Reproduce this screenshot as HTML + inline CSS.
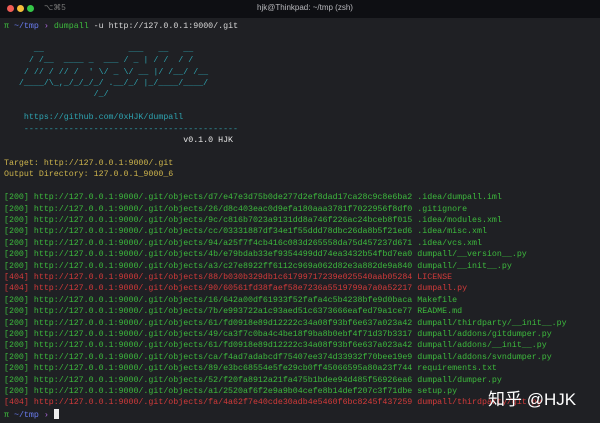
<!DOCTYPE html>
<html><head><meta charset="utf-8"><style>
html,body{margin:0;padding:0;}
body{width:600px;height:423px;background:#1f2024;overflow:hidden;position:relative;font-family:"Liberation Mono",monospace;}
.tb{position:absolute;left:0;top:0;width:600px;height:18px;background:#0e0f13;}
.dot{position:absolute;top:5px;width:7px;height:7px;border-radius:50%;}
.tt{position:absolute;top:3px;font-family:"Liberation Sans",sans-serif;font-size:8px;color:#b8b8bc;}
pre{position:absolute;left:4px;top:21px;margin:0;font-size:8.3px;line-height:11.4px;color:#d8d8d8;font-family:"Liberation Mono",monospace;}
.g{color:#3dba3d}.r{color:#d33a3a}.c{color:#2ea3b0}.y{color:#cdb44c}.b{color:#6a7cf0}.p{color:#b06ae0}.w{color:#e8e8e8}
.cur{display:inline-block;width:5px;height:10px;background:#eee;vertical-align:-2px;}
.wm{position:absolute;left:488px;top:385px;font-family:"Liberation Sans","Noto Sans CJK SC",sans-serif;font-size:17px;color:#fff;}
</style></head><body>
<div class="tb">
<div class="dot" style="left:7px;background:#ee5c55"></div>
<div class="dot" style="left:17px;background:#f5bd3a"></div>
<div class="dot" style="left:27px;background:#35c748"></div>
<div class="tt" style="left:44px;color:#777">⌥⌘5</div>
<div class="tt" style="left:257px">hjk@Thinkpad: ~/tmp (zsh)</div>
</div>
<pre><span class="g">π</span> <span class="b">~/tmp</span> <span class="p">›</span> <span class="g">dumpall</span> -u http://127.0.0.1:9000/.git

<span class="c">      __                 ___   __   __
     / /__  ____ _  ___ / _ | / /  / /
    / // / // /  ' \/ _ \/ __ |/ /__/ /__
   /____/\_,_/_/_/_/ .__/_/ |_/____/____/
                  /_/</span>

<span class="c">    https://github.com/0xHJK/dumpall</span>
<span class="c">    -------------------------------------------</span>
                                    <span class="w">v0.1.0 HJK</span>

<span class="y">Target: http://127.0.0.1:9000/.git</span>
<span class="y">Output Directory: 127.0.0.1_9000_6</span>

<span class="g">[200] http://127.0.0.1:9000/.git/objects/d7/e47e3d75b0de277d2ef8dad17ca28c9c8e6ba2 .idea/dumpall.iml
[200] http://127.0.0.1:9000/.git/objects/26/d8c403eac0d9efa180aaa3781f7022956f8df0 .gitignore
[200] http://127.0.0.1:9000/.git/objects/9c/c816b7023a9131dd8a746f226ac24bceb8f015 .idea/modules.xml
[200] http://127.0.0.1:9000/.git/objects/cc/03331887df34e1f55ddd78dbc26da8b5f21ed6 .idea/misc.xml
[200] http://127.0.0.1:9000/.git/objects/94/a25f7f4cb416c083d265558da75d457237d671 .idea/vcs.xml
[200] http://127.0.0.1:9000/.git/objects/4b/e79bdab33ef9354499dd74ea3432b54fbd7ea0 dumpall/__version__.py
[200] http://127.0.0.1:9000/.git/objects/a3/c27e8922ff6112c969a062d82e3a882de9a840 dumpall/__init__.py</span>
<span class="r">[404] http://127.0.0.1:9000/.git/objects/88/b030b329db1c61799717239e025540aab05284 LICENSE
[404] http://127.0.0.1:9000/.git/objects/90/60561fd38faef58e7236a5519799a7a0a52217 dumpall.py</span>
<span class="g">[200] http://127.0.0.1:9000/.git/objects/16/642a00df61933f52fafa4c5b4238bfe9d0baca Makefile
[200] http://127.0.0.1:9000/.git/objects/7b/e993722a1c93aed51c6373666eafed79a1ce77 README.md
[200] http://127.0.0.1:9000/.git/objects/61/fd0918e89d12222c34a08f93bf6e637a023a42 dumpall/thirdparty/__init__.py
[200] http://127.0.0.1:9000/.git/objects/49/ca3f7c0ba4c4be18f9ba8b0ebf4f71d37b3317 dumpall/addons/gitdumper.py
[200] http://127.0.0.1:9000/.git/objects/61/fd0918e89d12222c34a08f93bf6e637a023a42 dumpall/addons/__init__.py
[200] http://127.0.0.1:9000/.git/objects/ca/f4ad7adabcdf75407ee374d33932f70bee19e9 dumpall/addons/svndumper.py
[200] http://127.0.0.1:9000/.git/objects/89/e3bc68554e5fe29cb0ff45066595a80a23f744 requirements.txt
[200] http://127.0.0.1:9000/.git/objects/52/f20fa8912a21fa475b1bdee94d485f56926ea6 dumpall/dumper.py
[200] http://127.0.0.1:9000/.git/objects/a1/2520af6f2e9a9b04cefe8b14def207c3f71dbe setup.py</span>
<span class="r">[404] http://127.0.0.1:9000/.git/objects/fa/4a62f7e40cde30adb4e5460f6bc8245f437259 dumpall/thirdparty/git.py</span>
<span class="g">π</span> <span class="b">~/tmp</span> <span class="p">›</span> <span class="cur"></span></pre>
<div class="wm">知乎 @HJK</div>
</body></html>
